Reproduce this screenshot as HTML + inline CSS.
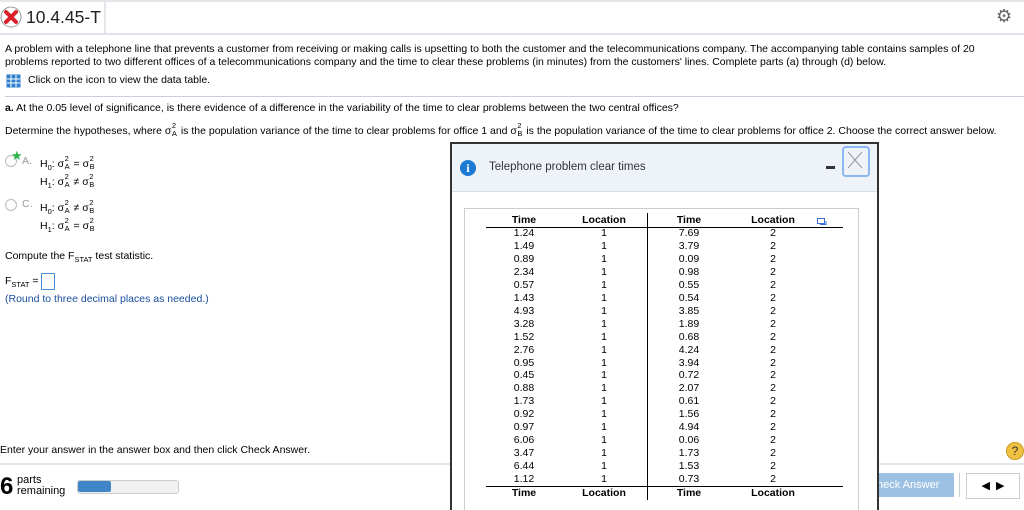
<!DOCTYPE html>
<html style="height:510px;overflow:hidden"><head><style>
body{margin:0;width:1024px;height:510px;overflow:hidden;background:#fff;font-family:"Liberation Sans",sans-serif;color:#000;position:relative}
.a{position:absolute;white-space:nowrap}
.t{font-size:10.5px}
.s{display:inline-block;position:relative;width:13px;line-height:10px}
.s i{font-style:normal;position:absolute;font-size:7.5px;left:7px;line-height:8px}
.s i.u{top:-4px}.s i.d{top:4px}
.h{position:absolute;font-size:10.5px;line-height:12px}
.h b{font-weight:normal;font-size:7.5px;position:relative;top:3px}
.r{position:absolute;font-size:10.5px;text-align:center;width:60px}
</style></head><body>
<div class="a" style="left:0;top:0;width:1024px;height:2px;background:#e4e6ec"></div>
<div class="a" style="left:0;top:33px;width:1024px;height:2px;background:#dfe2ea"></div>
<div class="a" style="left:104px;top:2px;width:2px;height:31px;background:#e4e6ec"></div>
<svg class="a" style="left:0;top:6px" width="22" height="22" viewBox="0 0 22 22"><circle cx="11" cy="11" r="10" fill="#fff" stroke="#999"/><path d="M6 6L16 16M16 6L6 16" stroke="#d9202a" stroke-width="4" stroke-linecap="round"/></svg>
<div class="a" style="left:26px;top:7px;font-size:17.5px;color:#222">10.4.45-T</div>
<div class="a" style="left:996px;top:6px;font-size:18px;color:#666">⚙</div>
<div class="a t" style="left:5px;top:43px;line-height:12.5px">A problem with a telephone line that prevents a customer from receiving or making calls is upsetting to both the customer and the telecommunications company. The accompanying table contains samples of 20<br>problems reported to two different offices of a telecommunications company and the time to clear these problems (in minutes) from the customers' lines. Complete parts (a) through (d) below.</div>
<svg class="a" style="left:6px;top:74px" width="15" height="14"><rect x="0.5" y="0.5" width="14" height="13" fill="#2f7fd0"/><path d="M1 5H14M1 9H14M5 1V13M10 1V13" stroke="#fff"/></svg>
<div class="a t" style="left:28px;top:74px">Click on the icon to view the data table.</div>
<div class="a" style="left:5px;top:96px;width:1019px;height:1px;background:#ccd"></div>
<div class="a t" style="left:5px;top:102px"><b>a.</b> At the 0.05 level of significance, is there evidence of a difference in the variability of the time to clear problems between the two central offices?</div>
<div class="a t" style="left:5px;top:125px">Determine the hypotheses, where <span class="s">σ<i class="u">2</i><i class="d">A</i></span> is the population variance of the time to clear problems for office 1 and <span class="s">σ<i class="u">2</i><i class="d">B</i></span> is the population variance of the time to clear problems for office 2. Choose the correct answer below.</div>
<div class="a" style="left:5px;top:155px;width:10px;height:10px;border:1px solid #bbb;border-radius:50%"></div>
<div class="a" style="left:11px;top:148px;color:#2db34a;font-size:13px">★</div>
<div class="a t" style="left:22px;top:155px;color:#999">A.</div>
<div class="h" style="left:40px;top:158px">H<b>0</b>: <span class="s">σ<i class="u">2</i><i class="d">A</i></span> = <span class="s">σ<i class="u">2</i><i class="d">B</i></span></div>
<div class="h" style="left:40px;top:176px">H<b>1</b>: <span class="s">σ<i class="u">2</i><i class="d">A</i></span> ≠ <span class="s">σ<i class="u">2</i><i class="d">B</i></span></div>
<div class="a" style="left:5px;top:199px;width:10px;height:10px;border:1px solid #bbb;border-radius:50%"></div>
<div class="a t" style="left:22px;top:198px;color:#999">C.</div>
<div class="h" style="left:40px;top:202px">H<b>0</b>: <span class="s">σ<i class="u">2</i><i class="d">A</i></span> ≠ <span class="s">σ<i class="u">2</i><i class="d">B</i></span></div>
<div class="h" style="left:40px;top:220px">H<b>1</b>: <span class="s">σ<i class="u">2</i><i class="d">A</i></span> = <span class="s">σ<i class="u">2</i><i class="d">B</i></span></div>
<div class="h" style="left:5px;top:250px">Compute the F<b>STAT</b> test statistic.</div>
<div class="h" style="left:5px;top:275px">F<b>STAT</b> = </div>
<div class="a" style="left:41px;top:273px;width:12px;height:15px;border:1px solid #4a90d9"></div>
<div class="a t" style="left:5px;top:293px;color:#1a4fa0">(Round to three decimal places as needed.)</div>
<div class="a t" style="left:0;top:444px">Enter your answer in the answer box and then click Check Answer.</div>
<div class="a" style="left:0;top:463px;width:1024px;height:2px;background:#e3e5ec"></div>
<div class="a" style="left:1006px;top:442px;width:16px;height:16px;border-radius:50%;background:#f0c040;border:1px solid #c89a20;font-size:12px;text-align:center;line-height:16px;color:#333">?</div>
<div class="a" style="left:0;top:473px;font-size:24px;font-weight:bold">6</div>
<div class="a" style="left:17px;top:475px;font-size:11px;line-height:11px">parts<br>remaining</div>
<div class="a" style="left:77px;top:480px;width:100px;height:12px;border:1px solid #ccc;border-radius:3px;background:#f1f1f1"></div>
<div class="a" style="left:78px;top:481px;width:33px;height:11px;background:#3f86c8;border-radius:2px"></div>
<div class="a" style="left:877px;top:473px;width:77px;height:24px;background:#9cc1e2;color:#fff;font-size:11px;line-height:24px">heck Answer</div>
<div class="a" style="left:959px;top:473px;width:1px;height:24px;background:#ccc"></div>
<div class="a" style="left:966px;top:473px;width:52px;height:24px;border:1px solid #ccc;font-size:11px;line-height:24px;text-align:center">◀ &nbsp;▶</div>
<div class="a" style="left:450px;top:142px;width:425px;height:368px;background:#fff;border-left:2px solid #333;border-right:2px solid #333;border-top:2px solid #333"></div>
<div class="a" style="left:452px;top:144px;width:425px;height:47px;background:#eef3fa;border-bottom:1px solid #d3dde8"></div>
<div class="a" style="left:460px;top:160px;width:16px;height:16px;border-radius:50%;background:#1d7bd4;color:#fff;font-size:12px;font-weight:bold;text-align:center;line-height:16px;font-family:'Liberation Serif',serif">i</div>
<div class="a" style="left:489px;top:161px;font-size:11.5px;color:#333">Telephone problem clear times</div>
<div class="a" style="left:826px;top:166px;width:9px;height:3px;background:#333"></div>
<div class="a" style="left:842px;top:146px;width:24px;height:27px;border:2px solid #8ab8ee;border-radius:4px"></div>
<svg class="a" style="left:846px;top:150px" width="18" height="20"><path d="M2 2L16 18M16 2L2 18" stroke="#999"/></svg>
<div class="a" style="left:464px;top:208px;width:393px;height:310px;border:1px solid #ccc"></div>
<div class="a" style="left:486px;top:227px;width:357px;height:1px;background:#000"></div>
<div class="a" style="left:486px;top:486px;width:357px;height:1px;background:#000"></div>
<div class="a" style="left:647px;top:213px;width:1px;height:287px;background:#000"></div>
<svg class="a" style="left:817px;top:218px" width="10" height="8"><rect x="0.5" y="0.5" width="7" height="5" fill="#fff" stroke="#3b6fd0"/><path d="M3 6.5H9V3" stroke="#3b6fd0" fill="none"/></svg>
<div id="tb"></div>
<script>
var d=[[1.24,7.69],[1.49,3.79],[0.89,0.09],[2.34,0.98],[0.57,0.55],[1.43,0.54],[4.93,3.85],[3.28,1.89],[1.52,0.68],[2.76,4.24],[0.95,3.94],[0.45,0.72],[0.88,2.07],[1.73,0.61],[0.92,1.56],[0.97,4.94],[6.06,0.06],[3.47,1.73],[6.44,1.53],[1.12,0.73]];
var h='';function c(x,y,t,b){h+='<div class="r" style="left:'+(x-30)+'px;top:'+y+'px'+(b?';font-weight:bold':'')+'">'+t+'</div>';}
c(524,214,'Time',1);c(604,214,'Location',1);c(689,214,'Time',1);c(773,214,'Location',1);
d.forEach(function(r,i){var y=227+i*12.95;c(524,y,r[0].toFixed(2));c(604,y,'1');c(689,y,r[1].toFixed(2));c(773,y,'2');});
c(524,487,'Time',1);c(604,487,'Location',1);c(689,487,'Time',1);c(773,487,'Location',1);
document.getElementById('tb').innerHTML=h;
</script>
</body></html>
